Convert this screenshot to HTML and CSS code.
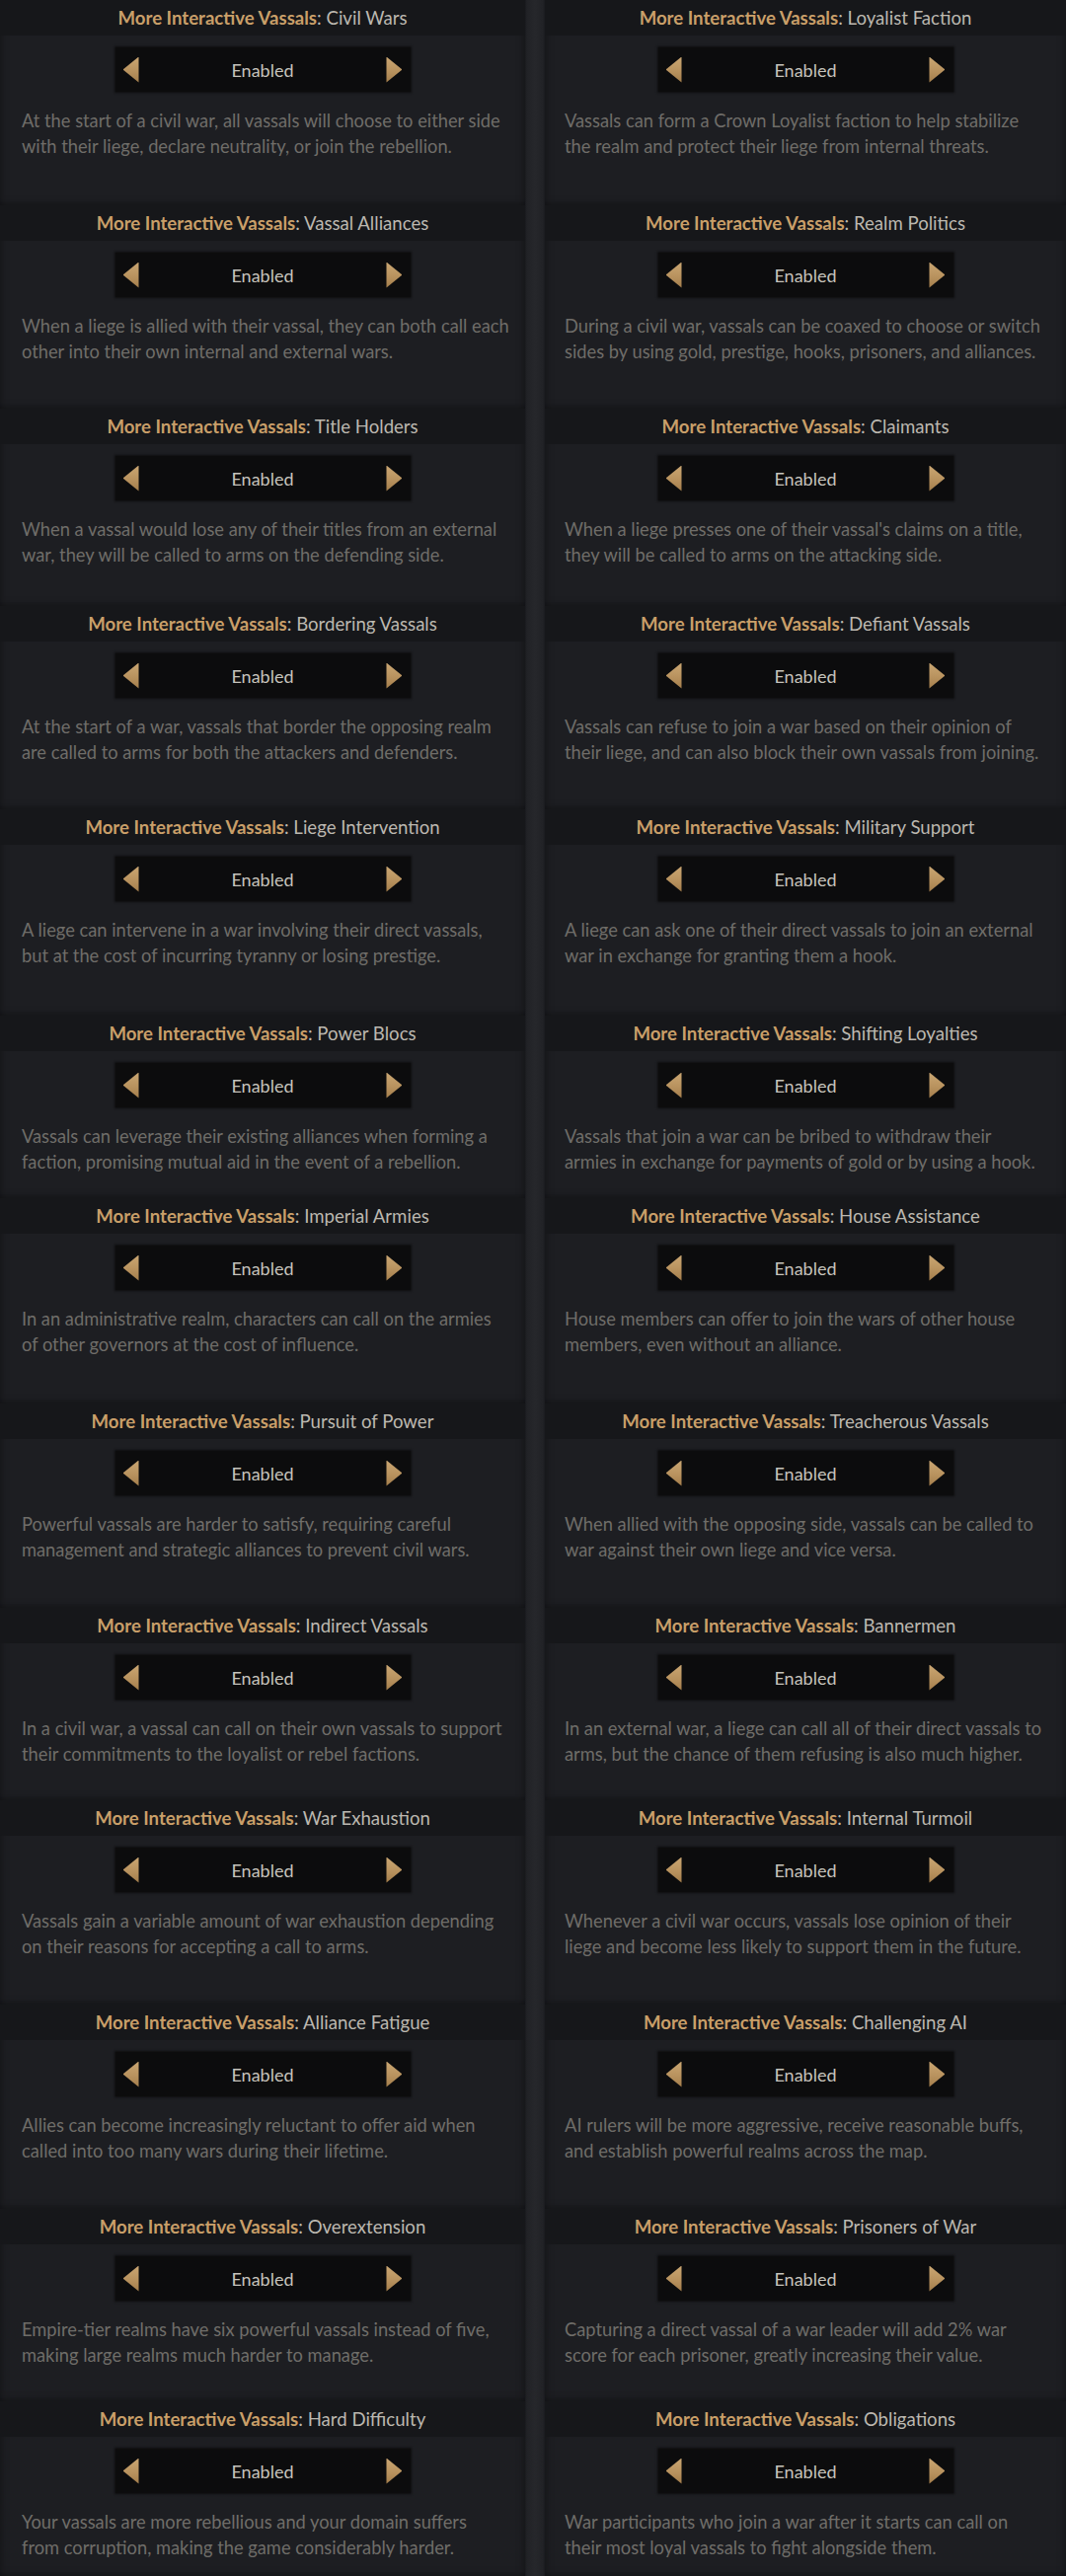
FILE: index.html
```html
<!DOCTYPE html>
<html lang="en">
<head>
<meta charset="utf-8">
<title>More Interactive Vassals – Game Rules</title>
<link rel="stylesheet" href="styles.css">
</head>
<body>
<main class="rules">

<section class="rule">
  <h2 class="rule-title"><b>More Interactive Vassals</b>: Civil Wars</h2>
  <div class="selector"><span class="arrow arrow-left"></span><span class="value">Enabled</span><span class="arrow arrow-right"></span></div>
  <p class="rule-desc">At the start of a civil war, all vassals will choose to either side<br>with their liege, declare neutrality, or join the rebellion.</p>
</section>
<section class="rule">
  <h2 class="rule-title"><b>More Interactive Vassals</b>: Loyalist Faction</h2>
  <div class="selector"><span class="arrow arrow-left"></span><span class="value">Enabled</span><span class="arrow arrow-right"></span></div>
  <p class="rule-desc">Vassals can form a Crown Loyalist faction to help stabilize<br>the realm and protect their liege from internal threats.</p>
</section>

<section class="rule">
  <h2 class="rule-title"><b>More Interactive Vassals</b>: Vassal Alliances</h2>
  <div class="selector"><span class="arrow arrow-left"></span><span class="value">Enabled</span><span class="arrow arrow-right"></span></div>
  <p class="rule-desc">When a liege is allied with their vassal, they can both call each<br>other into their own internal and external wars.</p>
</section>
<section class="rule">
  <h2 class="rule-title"><b>More Interactive Vassals</b>: Realm Politics</h2>
  <div class="selector"><span class="arrow arrow-left"></span><span class="value">Enabled</span><span class="arrow arrow-right"></span></div>
  <p class="rule-desc">During a civil war, vassals can be coaxed to choose or switch<br>sides by using gold, prestige, hooks, prisoners, and alliances.</p>
</section>

<section class="rule">
  <h2 class="rule-title"><b>More Interactive Vassals</b>: Title Holders</h2>
  <div class="selector"><span class="arrow arrow-left"></span><span class="value">Enabled</span><span class="arrow arrow-right"></span></div>
  <p class="rule-desc">When a vassal would lose any of their titles from an external<br>war, they will be called to arms on the defending side.</p>
</section>
<section class="rule">
  <h2 class="rule-title"><b>More Interactive Vassals</b>: Claimants</h2>
  <div class="selector"><span class="arrow arrow-left"></span><span class="value">Enabled</span><span class="arrow arrow-right"></span></div>
  <p class="rule-desc">When a liege presses one of their vassal's claims on a title,<br>they will be called to arms on the attacking side.</p>
</section>

<section class="rule">
  <h2 class="rule-title"><b>More Interactive Vassals</b>: Bordering Vassals</h2>
  <div class="selector"><span class="arrow arrow-left"></span><span class="value">Enabled</span><span class="arrow arrow-right"></span></div>
  <p class="rule-desc">At the start of a war, vassals that border the opposing realm<br>are called to arms for both the attackers and defenders.</p>
</section>
<section class="rule">
  <h2 class="rule-title"><b>More Interactive Vassals</b>: Defiant Vassals</h2>
  <div class="selector"><span class="arrow arrow-left"></span><span class="value">Enabled</span><span class="arrow arrow-right"></span></div>
  <p class="rule-desc">Vassals can refuse to join a war based on their opinion of<br>their liege, and can also block their own vassals from joining.</p>
</section>

<section class="rule">
  <h2 class="rule-title"><b>More Interactive Vassals</b>: Liege Intervention</h2>
  <div class="selector"><span class="arrow arrow-left"></span><span class="value">Enabled</span><span class="arrow arrow-right"></span></div>
  <p class="rule-desc">A liege can intervene in a war involving their direct vassals,<br>but at the cost of incurring tyranny or losing prestige.</p>
</section>
<section class="rule">
  <h2 class="rule-title"><b>More Interactive Vassals</b>: Military Support</h2>
  <div class="selector"><span class="arrow arrow-left"></span><span class="value">Enabled</span><span class="arrow arrow-right"></span></div>
  <p class="rule-desc">A liege can ask one of their direct vassals to join an external<br>war in exchange for granting them a hook.</p>
</section>

<section class="rule">
  <h2 class="rule-title"><b>More Interactive Vassals</b>: Power Blocs</h2>
  <div class="selector"><span class="arrow arrow-left"></span><span class="value">Enabled</span><span class="arrow arrow-right"></span></div>
  <p class="rule-desc">Vassals can leverage their existing alliances when forming a<br>faction, promising mutual aid in the event of a rebellion.</p>
</section>
<section class="rule">
  <h2 class="rule-title"><b>More Interactive Vassals</b>: Shifting Loyalties</h2>
  <div class="selector"><span class="arrow arrow-left"></span><span class="value">Enabled</span><span class="arrow arrow-right"></span></div>
  <p class="rule-desc">Vassals that join a war can be bribed to withdraw their<br>armies in exchange for payments of gold or by using a hook.</p>
</section>

<section class="rule">
  <h2 class="rule-title"><b>More Interactive Vassals</b>: Imperial Armies</h2>
  <div class="selector"><span class="arrow arrow-left"></span><span class="value">Enabled</span><span class="arrow arrow-right"></span></div>
  <p class="rule-desc">In an administrative realm, characters can call on the armies<br>of other governors at the cost of influence.</p>
</section>
<section class="rule">
  <h2 class="rule-title"><b>More Interactive Vassals</b>: House Assistance</h2>
  <div class="selector"><span class="arrow arrow-left"></span><span class="value">Enabled</span><span class="arrow arrow-right"></span></div>
  <p class="rule-desc">House members can offer to join the wars of other house<br>members, even without an alliance.</p>
</section>

<section class="rule">
  <h2 class="rule-title"><b>More Interactive Vassals</b>: Pursuit of Power</h2>
  <div class="selector"><span class="arrow arrow-left"></span><span class="value">Enabled</span><span class="arrow arrow-right"></span></div>
  <p class="rule-desc">Powerful vassals are harder to satisfy, requiring careful<br>management and strategic alliances to prevent civil wars.</p>
</section>
<section class="rule">
  <h2 class="rule-title"><b>More Interactive Vassals</b>: Treacherous Vassals</h2>
  <div class="selector"><span class="arrow arrow-left"></span><span class="value">Enabled</span><span class="arrow arrow-right"></span></div>
  <p class="rule-desc">When allied with the opposing side, vassals can be called to<br>war against their own liege and vice versa.</p>
</section>

<section class="rule">
  <h2 class="rule-title"><b>More Interactive Vassals</b>: Indirect Vassals</h2>
  <div class="selector"><span class="arrow arrow-left"></span><span class="value">Enabled</span><span class="arrow arrow-right"></span></div>
  <p class="rule-desc">In a civil war, a vassal can call on their own vassals to support<br>their commitments to the loyalist or rebel factions.</p>
</section>
<section class="rule">
  <h2 class="rule-title"><b>More Interactive Vassals</b>: Bannermen</h2>
  <div class="selector"><span class="arrow arrow-left"></span><span class="value">Enabled</span><span class="arrow arrow-right"></span></div>
  <p class="rule-desc">In an external war, a liege can call all of their direct vassals to<br>arms, but the chance of them refusing is also much higher.</p>
</section>

<section class="rule">
  <h2 class="rule-title"><b>More Interactive Vassals</b>: War Exhaustion</h2>
  <div class="selector"><span class="arrow arrow-left"></span><span class="value">Enabled</span><span class="arrow arrow-right"></span></div>
  <p class="rule-desc">Vassals gain a variable amount of war exhaustion depending<br>on their reasons for accepting a call to arms.</p>
</section>
<section class="rule">
  <h2 class="rule-title"><b>More Interactive Vassals</b>: Internal Turmoil</h2>
  <div class="selector"><span class="arrow arrow-left"></span><span class="value">Enabled</span><span class="arrow arrow-right"></span></div>
  <p class="rule-desc">Whenever a civil war occurs, vassals lose opinion of their<br>liege and become less likely to support them in the future.</p>
</section>

<section class="rule">
  <h2 class="rule-title"><b>More Interactive Vassals</b>: Alliance Fatigue</h2>
  <div class="selector"><span class="arrow arrow-left"></span><span class="value">Enabled</span><span class="arrow arrow-right"></span></div>
  <p class="rule-desc">Allies can become increasingly reluctant to offer aid when<br>called into too many wars during their lifetime.</p>
</section>
<section class="rule">
  <h2 class="rule-title"><b>More Interactive Vassals</b>: Challenging AI</h2>
  <div class="selector"><span class="arrow arrow-left"></span><span class="value">Enabled</span><span class="arrow arrow-right"></span></div>
  <p class="rule-desc">AI rulers will be more aggressive, receive reasonable buffs,<br>and establish powerful realms across the map.</p>
</section>

<section class="rule">
  <h2 class="rule-title"><b>More Interactive Vassals</b>: Overextension</h2>
  <div class="selector"><span class="arrow arrow-left"></span><span class="value">Enabled</span><span class="arrow arrow-right"></span></div>
  <p class="rule-desc">Empire-tier realms have six powerful vassals instead of five,<br>making large realms much harder to manage.</p>
</section>
<section class="rule">
  <h2 class="rule-title"><b>More Interactive Vassals</b>: Prisoners of War</h2>
  <div class="selector"><span class="arrow arrow-left"></span><span class="value">Enabled</span><span class="arrow arrow-right"></span></div>
  <p class="rule-desc">Capturing a direct vassal of a war leader will add 2% war<br>score for each prisoner, greatly increasing their value.</p>
</section>

<section class="rule">
  <h2 class="rule-title"><b>More Interactive Vassals</b>: Hard Difficulty</h2>
  <div class="selector"><span class="arrow arrow-left"></span><span class="value">Enabled</span><span class="arrow arrow-right"></span></div>
  <p class="rule-desc">Your vassals are more rebellious and your domain suffers<br>from corruption, making the game considerably harder.</p>
</section>
<section class="rule">
  <h2 class="rule-title"><b>More Interactive Vassals</b>: Obligations</h2>
  <div class="selector"><span class="arrow arrow-left"></span><span class="value">Enabled</span><span class="arrow arrow-right"></span></div>
  <p class="rule-desc">War participants who join a war after it starts can call on<br>their most loyal vassals to fight alongside them.</p>
</section>

</main>
</body>
</html>
```
FILE: styles.css
```css
html, body {
  margin: 0;
  padding: 0;
  background: #1c1d21;
}

body {
  font-family: Lato, "Noto Sans", "Liberation Sans", sans-serif;
  width: 1080px;
  height: 2610px;
  overflow: hidden;
}

.rules {
  display: grid;
  grid-template-columns: 532px 528px;
  grid-template-rows: 208px 206px 200px 206px 209px 185px 208px 207px 195px 207px 207px 195px 177px;
  column-gap: 20px;
  height: 2610px;
  background: linear-gradient(to right, #1a1b1f 0, #1a1b1f 532px, #212226 534px, #26272b 542px, #212226 550px, #1a1b1f 552px);
}

.rule {
  display: flex;
  flex-direction: column;
  background: #1d1e22;
  box-shadow: inset 6px 0 8px -6px rgba(0, 0, 0, 0.35), inset -6px 0 8px -6px rgba(0, 0, 0, 0.35), inset 0 -6px 8px -6px rgba(0, 0, 0, 0.35);
  overflow: hidden;
}

.rule-title {
  margin: 0;
  height: 36px;
  flex: none;
  display: flex;
  align-items: center;
  justify-content: center;
  background: #16171a;
  font-size: 18.6px;
  font-weight: 400;
  color: #bcb8b0;
  white-space: nowrap;
}

.rule-title b {
  font-weight: 700;
  color: #c99f69;
}

.selector {
  flex: none;
  width: 299px;
  height: 45px;
  margin: 12px auto 0;
  box-sizing: border-box;
  padding: 0 8px;
  display: flex;
  align-items: center;
  justify-content: space-between;
  background: #0c0c0d;
  box-shadow: 0 0 2px 1px #0e0e10;
}

.value {
  font-size: 18px;
  color: #c6c3bc;
}

.arrow {
  width: 16px;
  height: 26px;
  background: linear-gradient(to bottom, #caa672 0%, #b8925e 55%, #a37d4b 100%);
}

.arrow-left {
  clip-path: polygon(0 50%, 100% 0, 100% 100%);
}

.arrow-right {
  clip-path: polygon(0 0, 100% 50%, 0 100%);
}

.rule-desc {
  margin: 16px 0 0;
  padding: 0 0 0 22px;
  font-size: 18.3px;
  line-height: 26px;
  color: #6f6d69;
  white-space: nowrap;
}

.rule:nth-child(even) .rule-desc {
  padding-left: 20px;
}
```
